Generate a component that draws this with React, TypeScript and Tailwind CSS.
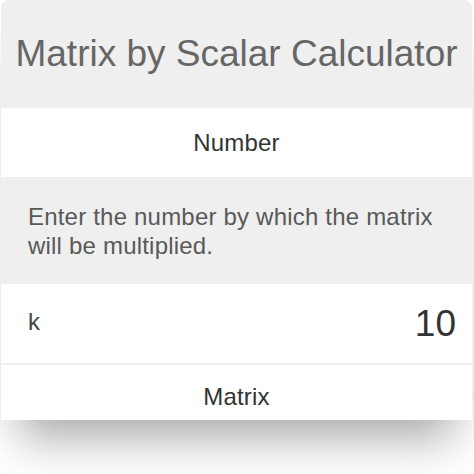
import React from 'react'

const font = { fontFamily: '"Liberation Sans", Arial, Helvetica, sans-serif' }

export default function App() {
  return (
    <div className="w-[474px] h-[474px] bg-white overflow-hidden" style={font}>
      <div className="mx-[1px] w-[471px] rounded-b-[6px] shadow-[0_36px_44px_-18px_rgba(0,0,0,0.34)]">
        <div className="h-[107px] bg-[#efefef] rounded-t-[8px] flex items-center justify-center">
          <h1 className="text-[37px] leading-none text-[#666666] whitespace-nowrap">
            Matrix by Scalar Calculator
          </h1>
        </div>

        <div className="h-[70px] bg-white flex items-center justify-center border-t border-[#f4f4f4]">
          <span className="text-[24px] tracking-[0.2px] text-[#333333]">Number</span>
        </div>

        <div className="h-[107px] bg-[#efefef] flex items-center px-[27px]">
          <p className="text-[24px] leading-[29px] tracking-[0.2px] text-[#595959]">
            Enter the number by which the matrix will be multiplied.
          </p>
        </div>

        <div className="h-[79px] bg-white rounded-b-[6px] flex items-center justify-between pl-[27px] pr-[16px]">
          <span className="text-[24px] text-[#444444] pb-[4px]">k</span>
          <span className="text-[37px] text-[#333333]">10</span>
        </div>

        <div className="h-[2px] bg-[#efefef]" />

        <div className="h-[55px] bg-white flex items-center justify-center">
          <span className="text-[24px] tracking-[0.2px] text-[#333333] pt-[8px]">Matrix</span>
        </div>
      </div>
    </div>
  )
}
